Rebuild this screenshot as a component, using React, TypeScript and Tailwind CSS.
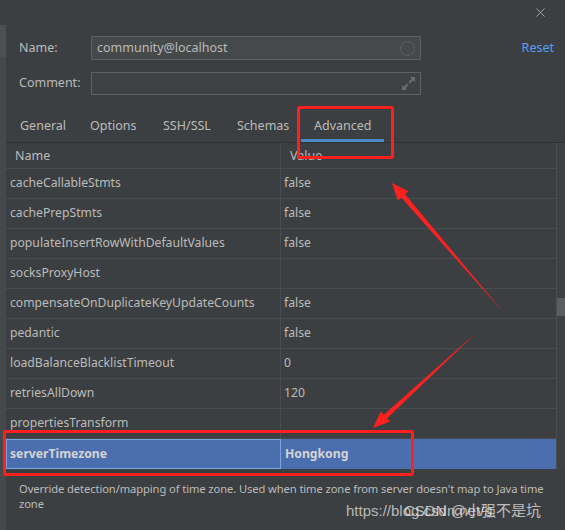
import { X } from 'lucide-react';

const rows: { name: string; value: string }[] = [
  { name: 'cacheCallableStmts', value: 'false' },
  { name: 'cachePrepStmts', value: 'false' },
  { name: 'populateInsertRowWithDefaultValues', value: 'false' },
  { name: 'socksProxyHost', value: '' },
  { name: 'compensateOnDuplicateKeyUpdateCounts', value: 'false' },
  { name: 'pedantic', value: 'false' },
  { name: 'loadBalanceBlacklistTimeout', value: '0' },
  { name: 'retriesAllDown', value: '120' },
  { name: 'propertiesTransform', value: '' },
];

const tabs = [
  { label: 'General', w: 'w-[70px]' },
  { label: 'Options', w: 'w-[73px]' },
  { label: 'SSH/SSL', w: 'w-[74px]' },
  { label: 'Schemas', w: 'w-[77px]' },
  { label: 'Advanced', w: 'w-[83px]', active: true },
];

function Annotations() {
  return (
    <>
      {/* red boxes drawn over the screenshot */}
      <div className="pointer-events-none absolute left-[297px] top-[106px] h-[53px] w-[97px] rounded-[3px] border-[3px] border-[#ff1f1f]" />
      <div className="pointer-events-none absolute left-[3px] top-[430px] h-[46px] w-[411px] rounded-[3px] border-[3px] border-[#ff1f1f]" />
      <svg className="pointer-events-none absolute left-0 top-0" width="565" height="530">
        <polygon
          points="392,183 408.4,191.3 405,194.3 504,313 401.2,197.5 397.8,200.5"
          fill="#ff2020"
        />
        <polygon
          points="373,428 380.8,411.4 383.8,414.7 477,332 387.2,418.3 390.2,421.6"
          fill="#ff2020"
        />
      </svg>
      {/* watermark */}
      <div className="pointer-events-none absolute left-[346px] top-[501px] text-[15px] leading-[20px] text-[#d8d8d8]/80 font-['Liberation_Sans',sans-serif]">
        https://blog.csdn.net/s
      </div>
      <div className="pointer-events-none absolute left-[404px] top-[501px] text-[15px] leading-[20px] text-[#e0e0e0]/80 font-['Liberation_Sans','Noto_Sans_CJK_SC',sans-serif]">
        CSDN @小强不是坑
      </div>
    </>
  );
}

export default function App() {
  return (
    <div className="relative h-[530px] w-[565px] overflow-hidden bg-[#3c3f41] text-[#bbbbbb] font-['Noto_Sans','Noto_Sans_CJK_SC',sans-serif]">
      {/* title bar */}
      <div className="flex h-[25px] items-center justify-end pr-[17px]">
        <X className="h-[15px] w-[15px] text-[#a0a0a0]" strokeWidth={1.6} />
      </div>

      <div className="flex h-[505px]">
        {/* left splitter strip */}
        <div className="flex w-[6px] flex-col">
          <div className="h-[32px] bg-[#4c5053]" />
          <div className="flex-1 bg-[#46494c]" />
        </div>

        <div className="flex flex-1 flex-col">
          {/* name / comment */}
          <div className="mt-[11px] flex h-[24px] items-center">
            <span className="w-[85px] pl-[13px] text-[12.5px]">Name:</span>
            <div className="relative flex h-[24px] w-[330px] items-center border border-[#5f6263] bg-[#45494a] pl-[5px] text-[12.5px]">
              community@localhost
              <span className="absolute right-[5px] top-[4px] h-[15px] w-[15px] rounded-full border-[1.5px] border-[#5d6062]" />
            </div>
            <span className="ml-auto pr-[11px] text-[12.5px] text-[#589df6]">Reset</span>
          </div>
          <div className="mt-[12px] flex h-[23px] items-center">
            <span className="w-[85px] pl-[13px] text-[12.5px]">Comment:</span>
            <div className="relative h-[23px] w-[330px] border border-[#5f6263] bg-[#3f4244]">
              <svg className="absolute right-[5px] top-[4px]" width="13" height="13" viewBox="0 0 13 13" fill="#6b6e70">
                <polygon points="13,0 13,5 11.2,3.3 8,6.5 6.5,5 9.7,1.8 8,0" />
                <polygon points="0,13 0,8 1.8,9.7 5,6.5 6.5,8 3.3,11.2 5,13" />
              </svg>
            </div>
          </div>

          {/* tabs */}
          <div className="mt-[14px] flex h-[34px] border-b border-[#2f3133] pl-[1px]">
            {tabs.map((t) => (
              <div
                key={t.label}
                className={`${t.w} flex items-center pl-[13px] pt-[2px] text-[12.5px] ${
                  t.active ? 'border-b-[3px] border-[#4a88c7] pt-[5px]' : ''
                }`}
              >
                {t.label}
              </div>
            ))}
          </div>

          {/* property table */}
          <div className="flex h-[326px]">
            <div className="flex flex-1 flex-col">
              <div className="flex h-[26px] border-b border-[#4a4d50] text-[12.5px]">
                <div className="flex w-[275px] items-center border-r border-[#4a4d50] pl-[9px] pt-[1px]">Name</div>
                <div className="flex flex-1 items-center pl-[9px] pt-[1px]">Value</div>
              </div>
              {rows.map((r) => (
                <div key={r.name} className="flex h-[30px] border-b border-[#4a4d50] text-[12.2px]">
                  <div className="flex w-[275px] items-center border-r border-[#4a4d50] pl-[4px]">{r.name}</div>
                  <div className="flex flex-1 items-center pl-[3px]">{r.value}</div>
                </div>
              ))}
              <div className="flex h-[30px] bg-[#4b6eaf] text-[12.2px] font-bold text-[#d4d4d4]">
                <div className="flex w-[275px] items-center border border-[#79a6e0] pl-[3px]">serverTimezone</div>
                <div className="flex flex-1 items-center pl-[4px]">Hongkong</div>
              </div>
            </div>
            {/* scrollbar */}
            <div className="w-[9px] border-l border-[#4c4f52] bg-[#3e4143] pt-[155px]">
              <div className="h-[18px] w-[8px] bg-[#5b5e60]" />
            </div>
          </div>

          {/* description */}
          <div className="pl-[13px] pt-[12px] text-[11.2px] leading-[15px] tracking-[-0.1px]">
            Override detection/mapping of time zone. Used when time zone from server doesn't map to Java time zone
          </div>
        </div>
      </div>

      <Annotations />
    </div>
  );
}
